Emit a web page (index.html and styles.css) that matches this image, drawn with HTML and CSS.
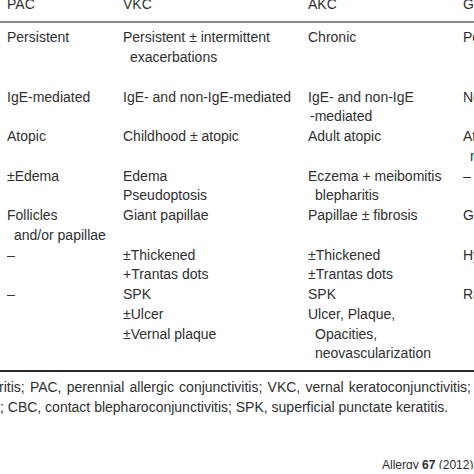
FILE: index.html
```html
<!DOCTYPE html>
<html>
<head>
<meta charset="utf-8">
<link rel="stylesheet" href="styles.css">
</head>
<body>
<div class="page">
  <div class="tbl">
    <div class="row head">
      <div class="cell c1"><div class="ln">PAC</div></div>
      <div class="cell c2"><div class="ln">VKC</div></div>
      <div class="cell c3"><div class="ln">AKC</div></div>
      <div class="cell c4"><div class="ln">GPC</div></div>
    </div>
    <div class="rule-top"></div>
    <div class="body">
      <div class="row">
        <div class="cell c1"><div class="ln">Persistent</div></div>
        <div class="cell c2"><div class="ln">Persistent ± intermittent</div><div class="ln cont">exacerbations</div></div>
        <div class="cell c3"><div class="ln">Chronic</div></div>
        <div class="cell c4"><div class="ln">Persistent</div><div class="ln">&nbsp;</div><div class="ln">&nbsp;</div></div>
      </div>
      <div class="row">
        <div class="cell c1"><div class="ln">IgE-mediated</div></div>
        <div class="cell c2"><div class="ln">IgE- and non-IgE-mediated</div></div>
        <div class="cell c3"><div class="ln">IgE- and non-IgE</div><div class="ln cont-s">-mediated</div></div>
        <div class="cell c4"><div class="ln">Non-IgE-mediated</div></div>
      </div>
      <div class="row">
        <div class="cell c1"><div class="ln">Atopic</div></div>
        <div class="cell c2"><div class="ln">Childhood ± atopic</div></div>
        <div class="cell c3"><div class="ln">Adult atopic</div></div>
        <div class="cell c4"><div class="ln">Atopic and</div><div class="ln cont">non-atopic</div></div>
      </div>
      <div class="row">
        <div class="cell c1"><div class="ln">±Edema</div></div>
        <div class="cell c2"><div class="ln">Edema</div><div class="ln">Pseudoptosis</div></div>
        <div class="cell c3"><div class="ln">Eczema + meibomitis</div><div class="ln cont">blepharitis</div></div>
        <div class="cell c4"><div class="ln">–</div></div>
      </div>
      <div class="row">
        <div class="cell c1"><div class="ln">Follicles</div><div class="ln cont">and/or papillae</div></div>
        <div class="cell c2"><div class="ln">Giant papillae</div></div>
        <div class="cell c3"><div class="ln">Papillae ± fibrosis</div></div>
        <div class="cell c4"><div class="ln">Giant papillae</div></div>
      </div>
      <div class="row">
        <div class="cell c1"><div class="ln">–</div></div>
        <div class="cell c2"><div class="ln">±Thickened</div><div class="ln">+Trantas dots</div></div>
        <div class="cell c3"><div class="ln">±Thickened</div><div class="ln">±Trantas dots</div></div>
        <div class="cell c4"><div class="ln">Hyperemia</div></div>
      </div>
      <div class="row">
        <div class="cell c1"><div class="ln">–</div></div>
        <div class="cell c2"><div class="ln">SPK</div><div class="ln">±Ulcer</div><div class="ln">±Vernal plaque</div></div>
        <div class="cell c3"><div class="ln">SPK</div><div class="ln">Ulcer, Plaque,</div><div class="ln cont">Opacities,</div><div class="ln cont">neovascularization</div></div>
        <div class="cell c4"><div class="ln">Rare</div></div>
      </div>
    </div>
    <div class="rule-bottom"></div>
  </div>
  <div class="notes">
    <div class="note-line just">ritis; PAC, perennial allergic conjunctivitis; VKC, vernal keratoconjunctivitis;</div>
    <div class="note-line">; CBC, contact blepharoconjunctivitis; SPK, superficial punctate keratitis.</div>
  </div>
  <div class="source">Allergy <b>67</b> (2012)</div>
</div>
</body>
</html>
```
FILE: styles.css
```css
html, body {
  margin: 0;
  padding: 0;
  background: #ffffff;
  overflow: hidden;
}
.page {
  width: 474px;
  height: 474px;
  overflow: hidden;
  font-family: "Liberation Sans", Arial, sans-serif;
  font-size: 14px;
  line-height: 19.75px;
  color: #2f2f2f;
  margin-top: -4.7px;
}
.tbl {
  display: flex;
  flex-direction: column;
}
.row {
  display: grid;
  grid-template-columns: 116px 185px 155px 200px;
  padding-left: 7px;
  white-space: nowrap;
}
.head {
  padding-bottom: 5.5px;
}
.rule-top {
  height: 2px;
  background: #8a8a8a;
}
.body {
  padding-top: 5.9px;
  padding-bottom: 6px;
}
.ln.cont {
  padding-left: 7px;
}
.ln.cont-s {
  padding-left: 2px;
}
.rule-bottom {
  height: 2px;
  background: #2a2a2a;
}
.notes {
  padding-top: 6px;
  line-height: 19.5px;
  white-space: nowrap;
}
.note-line.just {
  width: 472px;
  margin-left: -1px;
  text-align: justify;
  text-align-last: justify;
  white-space: normal;
}
.source {
  margin-top: 40px;
  padding-left: 382px;
  font-size: 12px;
  line-height: 16px;
  white-space: nowrap;
}
.source b {
  font-weight: bold;
}
```
